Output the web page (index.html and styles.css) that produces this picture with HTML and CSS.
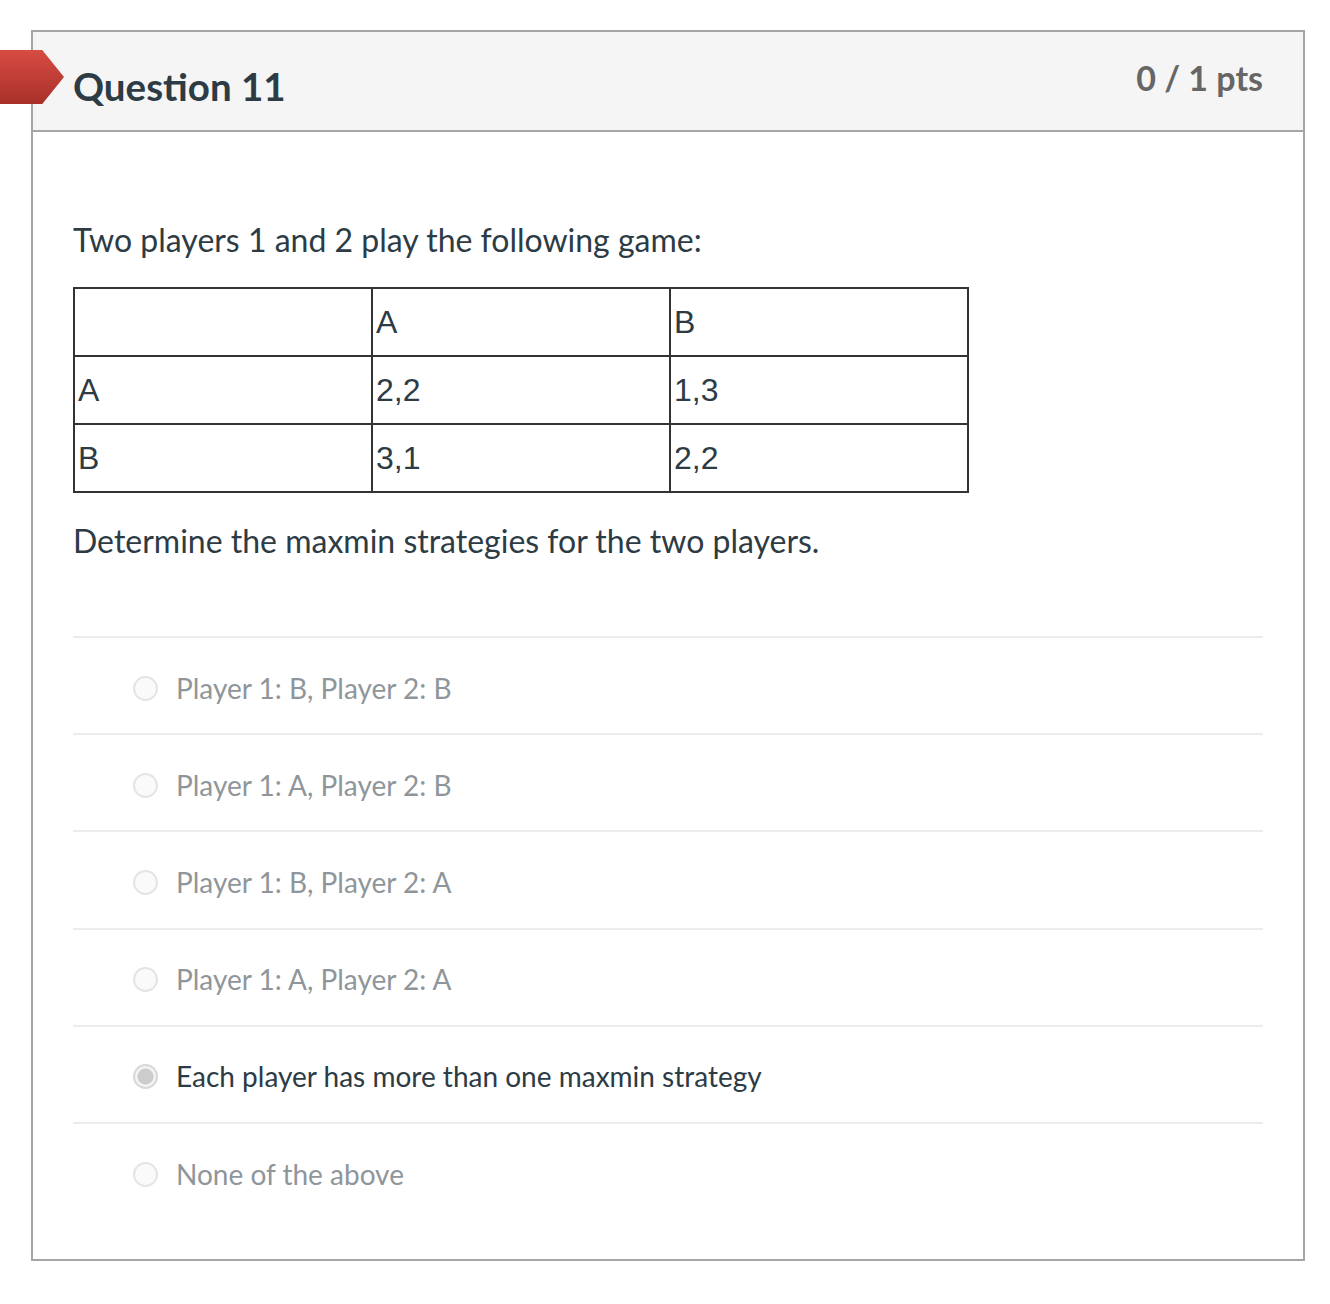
FILE: index.html
```html
<!DOCTYPE html>
<html lang="en">
<head>
    <meta charset="UTF-8">
    <title>Question 11</title>
    <link rel="stylesheet" href="styles.css">
</head>
<body>
    <div class="question">
        <span class="flag"></span>
        <div class="question-header">
            <h2 class="question-title">Question 11</h2>
            <div class="question-points">0 / 1 pts</div>
        </div>
        <div class="question-body">
            <p class="question-text">Two players 1 and 2 play the following game:</p>
            <table class="game">
                <tr>
                    <td></td>
                    <td>A</td>
                    <td>B</td>
                </tr>
                <tr>
                    <td>A</td>
                    <td>2,2</td>
                    <td>1,3</td>
                </tr>
                <tr>
                    <td>B</td>
                    <td>3,1</td>
                    <td>2,2</td>
                </tr>
            </table>
            <p class="question-text">Determine the maxmin strategies for the two players.</p>

            <div class="answers">
                <div class="answer"><span class="radio"></span><span class="answer-text">Player 1: B, Player 2: B</span></div>
                <div class="answer"><span class="radio"></span><span class="answer-text">Player 1: A, Player 2: B</span></div>
                <div class="answer"><span class="radio"></span><span class="answer-text">Player 1: B, Player 2: A</span></div>
                <div class="answer"><span class="radio"></span><span class="answer-text">Player 1: A, Player 2: A</span></div>
                <div class="answer selected"><span class="radio"></span><span class="answer-text">Each player has more than one maxmin strategy</span></div>
                <div class="answer"><span class="radio"></span><span class="answer-text">None of the above</span></div>
            </div>
        </div>
    </div>
</body>
</html>
```

FILE: styles.css
```css
body {
    font-family: Lato, "Open Sans", sans-serif;
    margin: 0;
    padding: 30px 25px 40px 31px;
    background: #fff;
    color: #2d3b45;
}

.question {
    position: relative;
    border: 2px solid #a5a5a5;
}

.flag {
    position: absolute;
    left: -33px;
    top: 18px;
    width: 64px;
    height: 54px;
    background: linear-gradient(#d64c42, #a9302a);
    clip-path: polygon(0 0, 66% 0, 100% 50%, 66% 100%, 0 100%);
}

.question-header {
    display: flex;
    justify-content: space-between;
    align-items: flex-start;
    background: #f5f5f5;
    border-bottom: 2px solid #a5a5a5;
    height: 98px;
    padding: 0 40px;
}

.question-title {
    margin: 34px 0 0 0;
    font-size: 38.5px;
    font-weight: 700;
    line-height: 40px;
}

.question-points {
    margin-top: 28px;
    font-size: 34px;
    font-weight: 700;
    color: #666;
    line-height: 36px;
}

.question-body {
    padding: 88px 40px 40px 40px;
}

.question-text {
    margin: 0;
    font-size: 32px;
    line-height: 40px;
}

.game {
    border-collapse: collapse;
    width: 896px;
    margin: 27px 0 28px 0;
    font-family: "Liberation Sans", Arial, sans-serif;
    font-size: 32px;
}

.game td {
    border: 2px solid #333;
    height: 66px;
    width: 33.3%;
    padding: 0 3px;
    vertical-align: middle;
}

.answers {
    margin-top: 75px;
}

.answer {
    display: flex;
    align-items: center;
    height: 91.2px;
    padding-top: 4px;
    border-top: 2px solid #ececec;
    padding-left: 60px;
}

.radio {
    width: 21px;
    height: 21px;
    border: 2px solid #e4e4e4;
    border-radius: 50%;
    background: #fafafa;
    margin-right: 18px;
    margin-top: 1px;
    box-sizing: content-box;
}

.answer-text {
    font-size: 28px;
    color: #8f969b;
}

.answer.selected .answer-text {
    color: #2d3b45;
}

.answer.selected .radio {
    background: radial-gradient(circle, #cccccc 0 7.5px, #f4f4f4 8.5px);
    border-color: #d8d8d8;
}
```
